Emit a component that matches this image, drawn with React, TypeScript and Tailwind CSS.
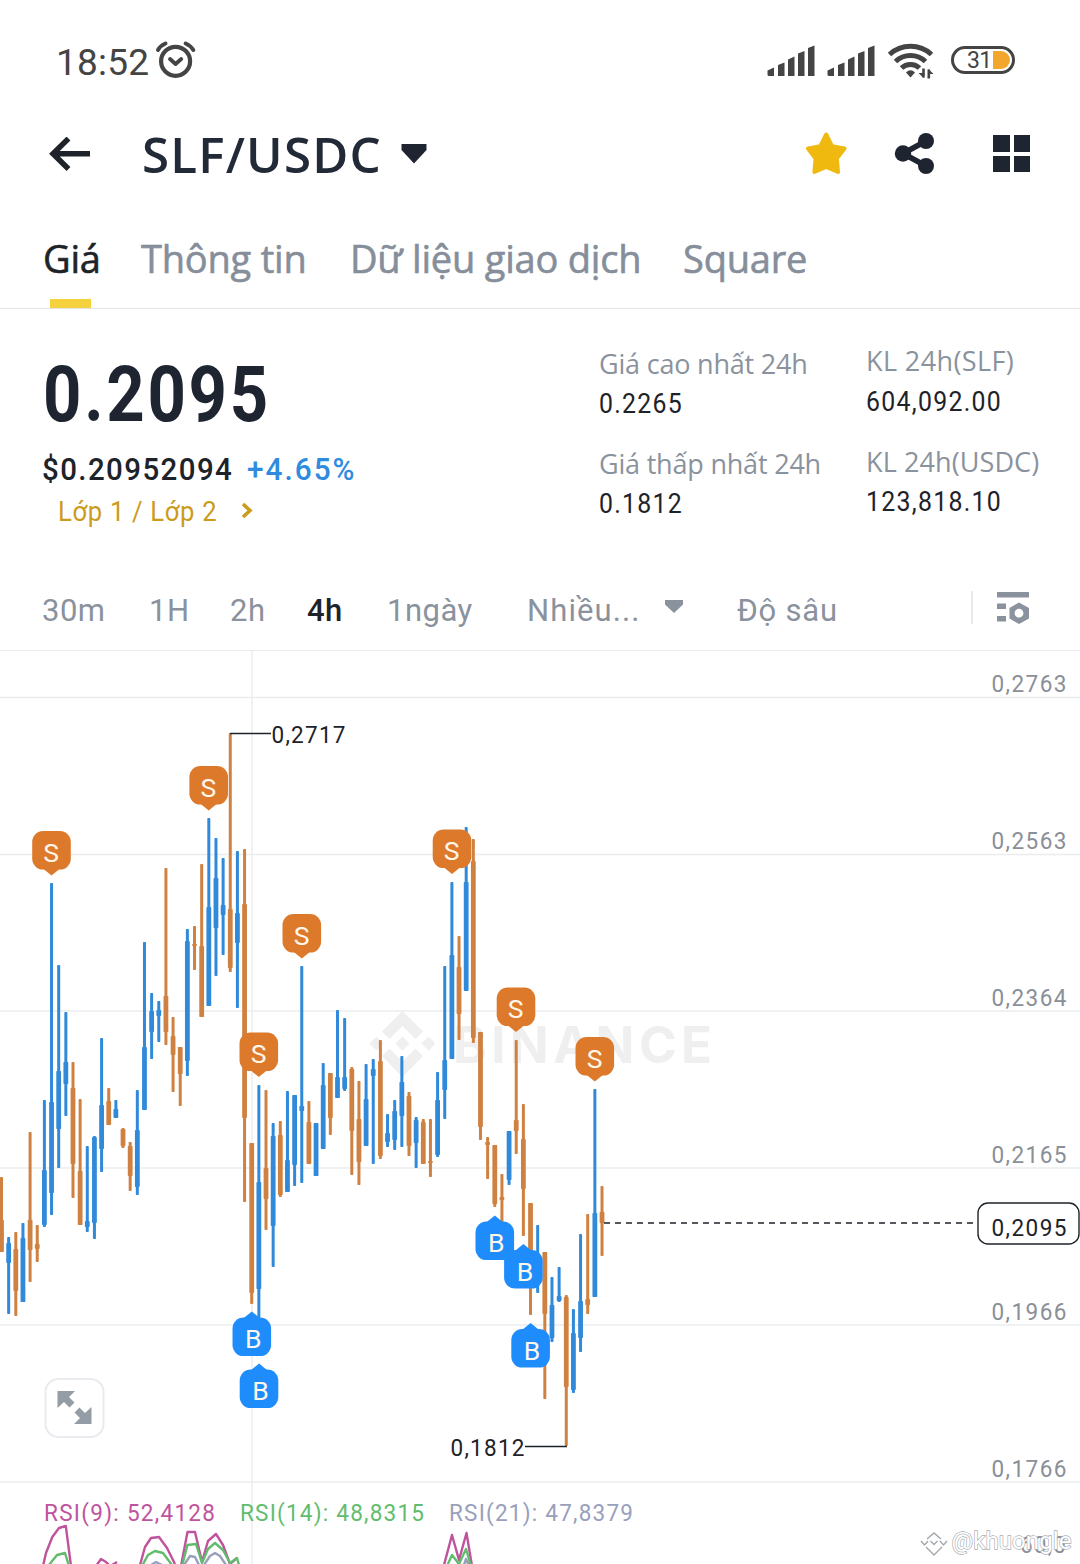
import React from 'react';

type Candle = [color: 'b' | 'o', high: number, top: number, bottom: number, low: number];

const BLUE = '#3189da';
const ORANGE = '#cf8142';

const candles: Candle[] = [
  ['o', 1177, 1220, 1252, 1252], ['b', 1237, 1243, 1263, 1314], ['o', 1232, 1249, 1291, 1316],
  ['b', 1223, 1238, 1302, 1302], ['o', 1132, 1220, 1250, 1282], ['o', 1225, 1244, 1249, 1262],
  ['b', 1100, 1170, 1225, 1227], ['b', 883, 1102, 1193, 1215], ['b', 965, 1071, 1129, 1168],
  ['b', 1012, 1062, 1084, 1116], ['o', 1062, 1088, 1164, 1198], ['o', 1099, 1171, 1225, 1225],
  ['b', 1146, 1221, 1227, 1232], ['b', 1136, 1137, 1223, 1239], ['b', 1038, 1105, 1149, 1172],
  ['o', 1088, 1101, 1125, 1125], ['b', 1100, 1109, 1118, 1118], ['o', 1128, 1129, 1146, 1148],
  ['o', 1142, 1146, 1176, 1191], ['b', 1090, 1130, 1187, 1195], ['b', 942, 1047, 1110, 1110],
  ['b', 993, 1011, 1032, 1059], ['b', 1001, 1010, 1016, 1042], ['o', 868, 996, 1032, 1045],
  ['o', 1017, 1036, 1055, 1092], ['o', 1047, 1047, 1074, 1106], ['b', 929, 941, 1061, 1076],
  ['o', 926, 944, 946, 970], ['o', 864, 946, 1017, 1017], ['b', 818, 907, 1006, 1006],
  ['b', 838, 878, 928, 976], ['b', 858, 905, 915, 955], ['o', 733, 909, 968, 972],
  ['b', 851, 913, 943, 1008], ['o', 849, 904, 1118, 1202], ['o', 1143, 1143, 1293, 1304],
  ['b', 1085, 1182, 1289, 1318], ['o', 1090, 1168, 1199, 1230], ['b', 1123, 1136, 1226, 1267],
  ['o', 1121, 1135, 1195, 1197], ['b', 1091, 1160, 1192, 1192], ['b', 1095, 1095, 1165, 1186],
  ['b', 966, 1106, 1111, 1183], ['o', 1101, 1122, 1164, 1164], ['b', 1123, 1123, 1176, 1176],
  ['b', 1063, 1085, 1149, 1149], ['o', 1073, 1073, 1118, 1135], ['b', 1010, 1077, 1098, 1098],
  ['b', 1018, 1077, 1089, 1091], ['o', 1067, 1069, 1131, 1175], ['o', 1081, 1119, 1162, 1185],
  ['b', 1064, 1099, 1146, 1146], ['b', 1059, 1069, 1076, 1164], ['o', 1040, 1061, 1156, 1159],
  ['b', 1114, 1133, 1142, 1147], ['b', 1100, 1111, 1140, 1150], ['b', 1056, 1082, 1116, 1147],
  ['o', 1092, 1096, 1146, 1156], ['b', 1117, 1120, 1143, 1168], ['o', 1119, 1122, 1164, 1164],
  ['o', 1119, 1161, 1163, 1177], ['b', 1072, 1100, 1155, 1157], ['b', 966, 1060, 1090, 1119],
  ['b', 882, 955, 1059, 1059], ['o', 936, 967, 1014, 1040], ['b', 827, 882, 991, 991],
  ['o', 839, 861, 1038, 1043], ['o', 1032, 1032, 1127, 1140], ['o', 1137, 1142, 1145, 1179],
  ['o', 1145, 1145, 1204, 1207], ['o', 1174, 1197, 1200, 1225], ['b', 1131, 1131, 1180, 1185],
  ['o', 1040, 1120, 1131, 1154], ['o', 1104, 1139, 1189, 1236], ['o', 1203, 1203, 1265, 1315],
  ['b', 1225, 1255, 1280, 1293], ['o', 1252, 1252, 1314, 1399], ['b', 1277, 1305, 1338, 1342],
  ['b', 1267, 1296, 1301, 1302], ['o', 1295, 1297, 1387, 1446], ['b', 1309, 1333, 1390, 1393],
  ['b', 1234, 1301, 1338, 1352], ['o', 1214, 1299, 1305, 1314], ['b', 1089, 1213, 1297, 1297],
  ['o', 1186, 1212, 1223, 1256],
];

const gridLines = [
  { y: 697.5, label: '0,2763' },
  { y: 854.5, label: '0,2563' },
  { y: 1011, label: '0,2364' },
  { y: 1168, label: '0,2165' },
  { y: 1325, label: '0,1966' },
  { y: 1482, label: '0,1766' },
];

const sells = [
  [51.5, 831], [208.7, 766], [301.8, 914], [258.8, 1032.5], [452, 829.5], [516, 987.5], [594.8, 1037],
];
const buys = [
  [251.8, 1317.5], [259, 1369.5], [494.8, 1221.5], [523.4, 1250], [530.6, 1329],
];

const tabs = [
  { label: 'Giá', box: 'w-[98px]', active: true },
  { label: 'Thông tin', box: 'w-[209px]' },
  { label: 'Dữ liệu giao dịch', box: 'w-[333px]' },
  { label: 'Square', box: 'w-[140px]' },
];

const SignalIcon = () => (
  <svg width="48" height="32" viewBox="767 45 48 32" className="-mt-[2px]" fill="#444">
    <path d="M767.5 70.5L774 67.5V76H769Q767.5 76 767.5 74.5ZM778 65L784.5 62.5V76H778ZM788 59.5L794.5 56.5V76H788ZM798 53.5L804.5 51V76H798ZM808 48L814.5 45.5V76H808Z" />
  </svg>
);

const StatusBar = () => (
  <div className="flex h-[124px] items-center pl-[56px] pr-[65px] text-[#444]">
    <span className="w-[99px] pt-px text-[37px] leading-[44px] tracking-[0.2px]">18:52</span>
    <svg width="42" height="40" viewBox="155 40 42 40" className="-mt-[5px]" fill="none" stroke="#444" strokeLinecap="round">
      <circle cx="175.6" cy="61.3" r="14.5" strokeWidth="4.2" />
      <path d="M170 59L175.6 64L181.2 59" strokeWidth="3.8" strokeLinejoin="round" />
      <path d="M158 50Q160.5 45.5 165.5 43.5M193.3 50Q190.5 45.5 185.6 43.5" strokeWidth="4" />
    </svg>
    <div className="ml-auto flex items-center">
      <SignalIcon />
      <span className="w-[12px]" />
      <SignalIcon />
      <svg width="48" height="38" viewBox="887 42 48 38" className="-mt-[4px] ml-[12px]" fill="none" stroke="#444" strokeWidth="5">
        <path d="M889.5 55.5A31 31 0 0 1 931.5 55.5" />
        <path d="M895.5 62.5A21.5 21.5 0 0 1 925.5 62.5" />
        <path d="M901.5 69A13 13 0 0 1 919.5 69" />
        <path d="M906 73.5Q910.5 69 915 73.5L910.5 78.5Z" fill="#444" stroke="none" />
        <path d="M923.5 69.5V78.5M928.8 79.5V70.5" strokeWidth="2.6" />
        <path d="M918.5 74L923.5 79L924.5 74ZM933.5 75L928.5 70L928 75Z" fill="#444" stroke="none" />
      </svg>
      <div className="relative -mt-[4px] ml-[16px] h-[28px] w-[64px] rounded-full border-[3px] border-[#444]">
        <span className="absolute left-[13px] top-[-1px] text-[23px] leading-[26px] tracking-[-0.8px]">31</span>
        <span className="absolute right-[2px] top-[2px] h-[18px] w-[17px] rounded-r-full bg-[#f3a62c]" />
      </div>
    </div>
  </div>
);

const TitleBar = () => (
  <div className="flex h-[60px] items-center pl-[49px] pr-[50px]">
    <svg width="42" height="34" viewBox="49 137 42 34" className="-mt-[1px]" fill="none" stroke="#1e2329" strokeWidth="5.5">
      <path d="M90 153.7H53M68.5 138.5L53 153.7L68.5 169" />
    </svg>
    <h1 className="ml-[51px] w-[259px] whitespace-nowrap font-['Open_Sans'] text-[49px] font-semibold leading-[60px] tracking-[1.2px] text-[#222a37]">
      <span className="inline-block origin-left scale-x-[1.005]">SLF/USDC</span>
    </h1>
    <svg width="26" height="20" viewBox="0 0 26 20" fill="#1e2430">
      <path d="M0.5 0H25.5V6L13 19.5L0.5 6Z" />
    </svg>
    <svg width="42" height="44" viewBox="805 132 42 44" className="ml-auto" fill="#f0b90f" stroke="#f0b90f" strokeWidth="4" strokeLinejoin="round">
      <path d="M826.2 134.5L832 146.2L844.5 148.5L836.8 158.5L838 172L826.2 167L814.4 172L815.6 158.5L808 148.5L820.4 146.2Z" />
    </svg>
    <svg width="42" height="44" viewBox="894 132 42 44" className="ml-[47px]" fill="#1e2430" stroke="#1e2430">
      <path d="M926 141L903 153.5L926 166" fill="none" strokeWidth="5.5" />
      <circle cx="926" cy="141" r="8" stroke="none" />
      <circle cx="903" cy="153.5" r="8.2" stroke="none" />
      <circle cx="926" cy="166" r="8" stroke="none" />
    </svg>
    <div className="-mt-[1px] ml-[57px] grid grid-cols-2 gap-[4px]">
      <span className="size-[16.5px] bg-[#1e2430]" />
      <span className="size-[16.5px] bg-[#1e2430]" />
      <span className="size-[16.5px] bg-[#1e2430]" />
      <span className="size-[16.5px] bg-[#1e2430]" />
    </div>
  </div>
);

const Tabs = () => (
  <nav className="flex h-[125px] border-b border-[#e6e6e6] pl-[42px] pt-[49px] font-['Open_Sans'] text-[38px] font-medium tracking-[-0.2px] [-webkit-text-stroke:0.6px]">
    {tabs.map((tab) => (
      <div key={tab.label} className={`${tab.box} ${tab.active ? 'text-[#1e2329]' : 'text-[#858e9a]'}`}>
        <span className="ml-px block whitespace-nowrap leading-[50px]">{tab.label}</span>
        {tab.active && <div className="ml-[8px] mt-[16px] h-[9px] w-[41px] bg-[#f5d13d]" />}
      </div>
    ))}
  </nav>
);

const statLabel = "block whitespace-nowrap font-['Open_Sans'] text-[27px] leading-[36px] text-[#8a929d]";
const statValue =
  'block origin-left scale-x-[0.92] whitespace-nowrap text-[27px] leading-[36px] tracking-[1.4px] text-[#1e2329]';

const PriceSummary = () => (
  <section className="flex h-[260px] pl-[42px]">
    <div className="w-[557px] pt-[46px]">
      <div className="h-[80px] text-[77px] font-bold leading-[80px] text-[#1e2530]">
        <span className="ml-px inline-block origin-left scale-x-[0.87] tracking-[3.1px]">0.2095</span>
      </div>
      <div className="mt-[15px] flex h-[40px] whitespace-nowrap text-[31px] font-medium leading-[40px]">
        <div className="w-[205px] text-[#1e2329]">
          <span className="inline-block origin-left scale-x-[0.95] tracking-[1.5px]">$0.20952094</span>
        </div>
        <span className="inline-block origin-left scale-x-[0.96] tracking-[2.1px] text-[#2f8be0]">+4.65%</span>
      </div>
      <div className="mt-[4px] flex h-[36px] items-center pl-[16px] text-[27px] leading-[36px] text-[#cb9b1d]">
        <div className="w-[183px] whitespace-nowrap">
          <span className="inline-block origin-left scale-x-[0.95] tracking-[0.7px]">Lớp 1 / Lớp 2</span>
        </div>
        <svg width="12" height="18" viewBox="0 0 12 18" className="-mt-[2px]" fill="none" stroke="#cb9b1d" strokeWidth="3.6">
          <path d="M2 2L9 8.5L2 15" />
        </svg>
      </div>
    </div>
    <div className="w-[267px] pt-[37px]">
      <span className={`${statLabel} tracking-[-0.2px]`}>Giá cao nhất 24h</span>
      <span className={`${statValue} mt-[4px]`}>0.2265</span>
      <span className={`${statLabel} mt-[24px] tracking-[-0.2px]`}>Giá thấp nhất 24h</span>
      <span className={`${statValue} mt-[4px]`}>0.1812</span>
    </div>
    <div className="pt-[34px]">
      <span className={`${statLabel} tracking-[0.4px]`}>KL 24h(SLF)</span>
      <span className={`${statValue} mt-[5px]`}>604,092.00</span>
      <span className={`${statLabel} mt-[24px] tracking-[0.1px]`}>KL 24h(USDC)</span>
      <span className={`${statValue} mt-[4px]`}>123,818.10</span>
    </div>
  </section>
);

const Timeframes = () => (
  <div className="flex h-[82px] items-center whitespace-nowrap border-b border-[#ececee] pl-[42px] text-[31px] tracking-[0.5px] text-[#8a929d]">
    <span className="w-[107px] pt-[3px]">30m</span>
    <span className="w-[81px] pt-[3px]">1H</span>
    <span className="w-[77px] pt-[3px]">2h</span>
    <span className="w-[80px] pt-[4px] font-medium text-[#1e2329]">4h</span>
    <span className="w-[140px] pt-[3px]">1ngày</span>
    <span className="w-[138px] pt-[3px] tracking-[1.1px]">Nhiều...</span>
    <svg width="18" height="13" viewBox="0 0 18 13" className="-mt-[7px]" fill="#8a929d">
      <path d="M0 0H18V4.5L9 13L0 4.5Z" />
    </svg>
    <span className="ml-[54px] w-[234px] pt-[3px] tracking-[0.8px]">Độ sâu</span>
    <span className="-mt-[4px] h-[33px] w-[2px] bg-[#e8eaed]" />
    <svg width="34" height="34" viewBox="996 591 34 34" className="-mt-[3px] ml-[23px]" fill="#8a929d">
      <path d="M997 592H1029V597.5H997ZM997 603.5H1006V609H997ZM997 616H1006V621.5H997Z" />
      <path fillRule="evenodd" d="M1019 602.5L1029 608V618.5L1019 624L1009.5 618.5V608ZM1019 608.8A4.4 4.4 0 1 0 1019 617.6A4.4 4.4 0 1 0 1019 608.8Z" />
    </svg>
  </div>
);

// Slightly condensed label with a fixed drawn width
const ChartText = ({ x, y, w, fill, children }: { x: number; y: number; w: number; fill: string; children: string }) => (
  <text transform={`translate(${x} ${y}) scale(0.92 1)`} fontSize="24.5" fill={fill} textLength={w / 0.92}>
    {children}
  </text>
);

const Marker = ({ x, y, side }: { x: number; y: number; side: 'S' | 'B' }) => (
  <g transform={`translate(${x} ${y})`}>
    <rect x="-19.3" width="38.6" height="38.6" rx="11" fill={side === 'S' ? '#dc792b' : '#1e8dfb'} />
    {side === 'S' ? (
      <path d="M-8 38L0 44.5L8 38Z" fill="#dc792b" />
    ) : (
      <path d="M-8 0.6L0 -6L8 0.6Z" fill="#1e8dfb" />
    )}
    <text x={side === 'S' ? -0.3 : 1.5} y="30.8" textAnchor="middle" fontSize="26.5" fill="#fff6ea">
      {side}
    </text>
  </g>
);

const PriceChart = () => (
  <svg width="1080" height="913" viewBox="0 651 1080 913" className="block" fontFamily="Roboto, sans-serif">
    {/* grid */}
    {gridLines.map((g) => (
      <path key={g.label} d={`M0 ${g.y}H1080`} stroke="#ebecee" strokeWidth="1.5" />
    ))}
    <path d="M252 651V1564" stroke="#ebecee" strokeWidth="1.5" />

    {/* watermark */}
    <g fill="#efeff0">
      <path d="M402.5 1011L423 1031.5L415.5 1039L402.5 1026L389.5 1039L382 1031.5Z" />
      <path d="M402.5 1077L423 1056L415.5 1048.5L402.5 1061.5L389.5 1048.5L382 1056Z" />
      <path d="M402.5 1036.5L409.5 1043.5L402.5 1050.5L395.5 1043.5ZM376.5 1036.5L383.5 1043.5L376.5 1050.5L369.5 1043.5ZM428.5 1036.5L435.5 1043.5L428.5 1050.5L421.5 1043.5Z" />
      <text x="453" y="1063" fontFamily="Inter, sans-serif" fontWeight="700" fontSize="51" textLength="259">BINANCE</text>
    </g>

    {candles.map(([color, high, top, bottom, low], i) => {
      const x = 1.5 + i * 7.149;
      const fill = color === 'b' ? BLUE : ORANGE;
      return (
        <g key={i} fill={fill}>
          <rect x={x - 1.5} y={high} width="3" height={low - high} rx="0.8" />
          <rect x={x - 2.4} y={top} width="4.8" height={Math.max(bottom - top, 2)} rx="0.8" />
        </g>
      );
    })}

    {sells.map(([x, y]) => (
      <Marker key={x} x={x} y={y} side="S" />
    ))}
    {buys.map(([x, y]) => (
      <Marker key={x} x={x} y={y} side="B" />
    ))}

    {/* high / low callouts */}
    <path d="M230 733.5H271M525 1446.5H567" stroke="#1e2329" strokeWidth="1.3" />
    <ChartText x={271.5} y={743} w={74} fill="#1e2329">0,2717</ChartText>
    <ChartText x={450.5} y={1456} w={74} fill="#1e2329">0,1812</ChartText>

    {/* last price */}
    <path d="M604 1223H974" stroke="#1e2329" strokeWidth="1.7" strokeDasharray="6 5" />
    <rect x="978" y="1203" width="101" height="41" rx="10" fill="#fff" stroke="#1e2329" strokeWidth="1.4" />
    <ChartText x={991.5} y={1236} w={75} fill="#1e2329">0,2095</ChartText>

    {gridLines.map((g) => (
      <ChartText key={g.label} x={991.5} y={g.y - 5.5} w={75} fill="#8a8f98">
        {g.label}
      </ChartText>
    ))}

    {/* expand button */}
    <rect x="45.5" y="1379" width="58" height="58" rx="13" fill="#fff" stroke="#e9ebee" strokeWidth="2" />
    <path d="M57.5 1391H75L69 1397L74.5 1402.5L69.5 1407.5L64 1402L57.5 1408ZM91.5 1424H74L80 1418L74.5 1412.5L79.5 1407.5L85 1413L91.5 1407Z" fill="#949ca6" />

    {/* RSI pane */}
    <ChartText x={44} y={1521} w={171} fill="#bf539e">RSI(9): 52,4128</ChartText>
    <ChartText x={240} y={1521} w={184} fill="#61bd6d">RSI(14): 48,8315</ChartText>
    <ChartText x={449} y={1521} w={184} fill="#99a0bb">RSI(21): 47,8379</ChartText>
    <g fill="none" strokeWidth="2.4" strokeLinejoin="round">
      <path d="M151 1565L156 1562L162 1565M184 1565L190 1556L195 1557L199 1565M204 1565L210 1556L215 1553L220 1556L226 1565M464 1565L466 1559L469 1565" stroke="#99a0bb" />
      <path d="M43 1566L46 1553L52.3 1537L59 1528L65.8 1526L71 1566M96 1566L101 1559L106 1562L109 1565M112 1565L117 1562M140 1565L145 1547L151 1538L159 1537L167 1548L175 1564M181 1566L187.5 1532L195 1532L202 1562L208 1541L216 1534L223 1545L230 1564L237 1558M444 1565L452 1535L459 1560L466.5 1533L472 1566" stroke="#bf539e" />
      <path d="M49 1565L57 1555L65 1553L69 1566M142 1566L148 1555L155 1551L163 1553L172 1565M182 1566L187.5 1545L196 1544L202 1563L208 1549L215 1543L223 1550L230 1563L237 1558L239 1565M447 1566L452 1555L459 1564L466 1549L471 1566" stroke="#61bd6d" />
    </g>

    {/* author tag over the RSI axis label */}
    <ChartText x={1020} y={1553} w={46} fill="#8a8f98">60,0</ChartText>
    <g fill="none" stroke="#a5a8ad" strokeWidth="1.4">
      <path d="M927 1539L934 1533L941 1539M921 1541L924.5 1545L928 1541M930.5 1541L934 1544.5L937.5 1541M940 1541L943.5 1545L947 1541M926 1547L934 1555L942 1547" />
    </g>
    <text x="951.5" y="1549" fontSize="24" fill="#fff" stroke="#a9acb1" strokeWidth="1.3" paintOrder="stroke" textLength="120">
      @khuongle
    </text>
  </svg>
);

const App: React.FC = () => {
  return (
    <main className="h-[1564px] w-[1080px] overflow-hidden bg-white font-['Roboto',sans-serif]">
      <StatusBar />
      <TitleBar />
      <Tabs />
      <PriceSummary />
      <Timeframes />
      <PriceChart />
    </main>
  );
};

export default App;
